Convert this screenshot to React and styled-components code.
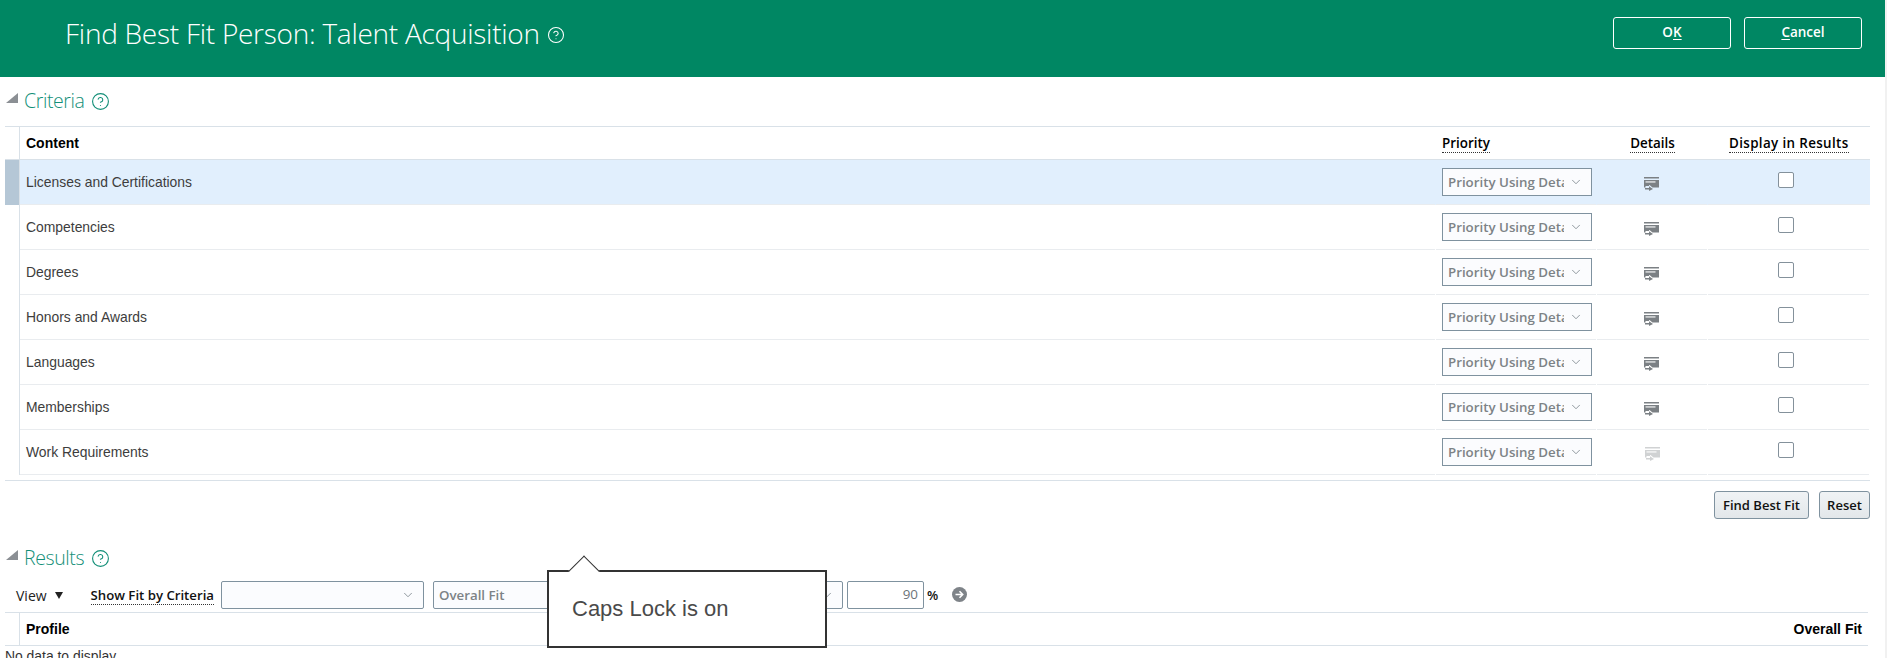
import React from "react";
import styled, { createGlobalStyle } from "styled-components";
import { CircleHelp, ChevronDown } from "lucide-react";

const Global = createGlobalStyle`
  html, body { margin: 0; padding: 0; background: #f1f1f1; overflow: hidden; }
  * { box-sizing: border-box; }
`;

const SANS = `"Liberation Sans", Arial, sans-serif`;
const UI = `"Open Sans", "Noto Sans", sans-serif`;
const LINE = "#d9e1e8";
const ROW_LINE = "#e9ecef";

const Page = styled.div`
  position: relative;
  width: 1885px;
  height: 658px;
  overflow: hidden;
  background: #fff;
  font-family: ${SANS};
`;

const Header = styled.header`
  height: 77px;
  background: #008763;
  padding: 17px 23px 0 65px;
  display: flex;
  justify-content: space-between;
  align-items: flex-start;
  color: #fff;
`;

const TitleWrap = styled.div`
  display: flex;
  align-items: center;
  gap: 7px;
  height: 36px;
`;

const Title = styled.h1`
  margin: -5px 0 0;
  font: 300 28px/36px ${UI};
  letter-spacing: -0.26px;
`;

const HeaderActions = styled.div`
  display: flex;
  gap: 13px;
`;

const HeaderButton = styled.button`
  width: 118px;
  height: 32px;
  background: transparent;
  border: 1px solid #fff;
  border-radius: 3px;
  color: #fff;
  font: 600 13.5px/1 ${UI};
  padding: 0;
  u { text-underline-offset: 2px; }
`;

const Section = styled.section`
  padding: 0 15px 0 5px;
`;

const SectionHead = styled.div`
  height: ${(p) => p.$height}px;
  margin-top: ${(p) => p.$top || 0}px;
  display: flex;
  align-items: center;
`;

const Triangle = styled.svg`
  width: 12px;
  height: 10px;
  margin: 0 6px 7px 1px;
  fill: #8b8f94;
`;

const SectionTitle = styled.h2`
  margin: ${(p) => p.$lift || 0}px 7px 0 0;
  font: 300 19.5px/1 ${UI};
  letter-spacing: -0.4px;
  color: #138f78;
`;

const GRID = "15px 1416px 161px 111px 1fr";

const TableRow = styled.div`
  display: grid;
  grid-template-columns: ${GRID};
  height: 45px;
  background: ${(p) => (p.$selected ? "#e1effd" : "transparent")};
`;

const HeadRow = styled(TableRow)`
  height: 34px;
  border-top: 1px solid ${LINE};
  border-bottom: 1px solid ${LINE};
`;

const Selector = styled.div`
  border-right: 1px solid ${LINE};
  background: ${(p) => (p.$selected ? "#b5c7d6" : "transparent")};
`;

const Cell = styled.div`
  display: flex;
  align-items: center;
  justify-content: ${(p) => p.$justify || "flex-start"};
  padding-left: ${(p) => p.$pad || 0}px;
  padding-right: ${(p) => p.$padRight || 0}px;
  margin-right: 1px;
  border-bottom: 1px solid ${ROW_LINE};
  font-size: 13.9px;
  color: #3d3d3d;
`;

const HeadCell = styled.div`
  display: flex;
  align-items: center;
  justify-content: ${(p) => p.$justify || "flex-start"};
  padding-left: ${(p) => p.$pad || 0}px;
  padding-right: ${(p) => p.$padRight || 0}px;
`;

const PlainHead = styled.span`
  font: 700 14px/1 ${SANS};
  color: #000;
`;

const DottedHead = styled.span`
  font: 600 13.4px/17px ${UI};
  letter-spacing: ${(p) => p.$track || 0}px;
  margin-top: 1px;
  color: #000;
  border-bottom: 1px dotted #333;
`;

const RowEnd = styled.div`
  height: 6px;
  border-bottom: 1px solid ${LINE};
`;

const Select = styled.div`
  width: ${(p) => p.$width}px;
  height: 28px;
  flex: none;
  display: flex;
  align-items: center;
  padding: 0 8px 0 5px;
  background: #fbfcfe;
  border: 1px solid #7f929f;
  border-radius: ${(p) => (p.$round ? 2 : 0)}px;
  font: 600 13.3px/1 ${UI};
  color: #7d8386;
`;

const SelectText = styled.span`
  flex: 1;
  min-width: 0;
  white-space: nowrap;
  overflow: hidden;
  margin: 2px 5px 0 0;
`;

const Check = styled.div`
  width: 16px;
  height: 16px;
  margin-top: -5px;
  background: #fff;
  border: 1px solid #84919b;
  border-radius: 2px;
`;

const IconSlot = styled.svg`
  width: 15px;
  height: 14px;
  margin-top: 3px;
  margin-left: ${(p) => (p.$faded ? 3 : 0)}px;
  opacity: ${(p) => (p.$faded ? 0.35 : 1)};
`;

const ActionBar = styled.div`
  display: flex;
  justify-content: flex-end;
  gap: 10px;
  padding-top: 10px;
`;

const ActionButton = styled.button`
  height: 28px;
  width: ${(p) => p.$width}px;
  padding: 0;
  border: 1px solid #7f929f;
  border-radius: 3px;
  background: linear-gradient(#f0f3f5, #e3e7ea);
  font: 600 13px/1 ${UI};
  color: #111;
`;

const Toolbar = styled.div`
  height: 35px;
  padding: 4px 0 0 11px;
  display: flex;
  align-items: flex-start;
`;

const ViewMenu = styled.div`
  width: 74.5px;
  height: 28px;
  padding-top: 1px;
  display: flex;
  align-items: center;
  gap: 8px;
  font: 400 14px/1 ${UI};
  color: #222;
`;

const Caret = styled.span`
  width: 0;
  height: 0;
  border-left: 4px solid transparent;
  border-right: 4px solid transparent;
  border-top: 7px solid #222;
`;

const FieldLabel = styled.span`
  font: 600 13.2px/17px ${UI};
  color: #111;
  border-bottom: 1px dotted #333;
  margin: 6px 7px 0 0;
  white-space: nowrap;
`;

const Spacer = styled.div`
  width: ${(p) => p.$w}px;
  flex: none;
`;

const NumberBox = styled.div`
  width: 77px;
  height: 28px;
  margin-left: 4px;
  padding-right: 5px;
  display: flex;
  align-items: center;
  justify-content: flex-end;
  border: 1px solid #7f929f;
  border-radius: 2px;
  font: 400 13.4px/1 ${UI};
  color: #6c7478;
`;

const Unit = styled.span`
  margin: 6px 14px 0 3px;
  font: 600 13px/16px ${UI};
  color: #111;
`;

const GoIcon = styled.svg`
  width: 15px;
  height: 15px;
  margin-top: 6px;
`;

const ProfileHead = styled.div`
  height: 34px;
  width: 1863px;
  display: grid;
  grid-template-columns: 15px 1fr auto;
  border-top: 1px solid ${LINE};
  border-bottom: 1px solid ${LINE};
`;

const Empty = styled.div`
  font: 400 13.9px/18px ${SANS};
  color: #333;
  padding-top: 1px;
`;

const Tooltip = styled.div`
  position: absolute;
  left: 547px;
  top: 570px;
  width: 280px;
  height: 78px;
  padding: 0 0 0 23px;
  display: flex;
  align-items: center;
  background: #fff;
  border: 2px solid #333;
  font: 400 22px/1 ${SANS};
  color: #4a4a4a;
  &::before {
    content: "";
    position: absolute;
    left: 24px;
    top: -12px;
    width: 21px;
    height: 21px;
    background: #fff;
    border-top: 1px solid #333;
    border-left: 1px solid #333;
    transform: rotate(45deg);
  }
`;

const DetailsIcon = ({ faded }) => (
  <IconSlot $faded={faded} viewBox="0 0 15 14">
    <path fill="#7b8084" d="M0 0h15v1.5H0zM0 3h15v7.5H8.5L5.5 8H5v1H1.5v1.5H0z" />
    <path fill="#7b8084" d="M1 11h4V9.2L9 12l-4 2v-1.6H1z" />
    <path fill="#fff" d="M1.5 4.4h10v1.1h-10z" />
  </IconSlot>
);

const rows = [
  "Licenses and Certifications",
  "Competencies",
  "Degrees",
  "Honors and Awards",
  "Languages",
  "Memberships",
  "Work Requirements",
];

const SectionTriangle = () => (
  <Triangle viewBox="0 0 12 10">
    <path d="M12 0v10H0z" />
  </Triangle>
);

export default function App() {
  return (
    <Page>
      <Global />
      <Header>
        <TitleWrap>
          <Title>Find Best Fit Person: Talent Acquisition</Title>
          <CircleHelp size={18} strokeWidth={1.4} color="#fff" />
        </TitleWrap>
        <HeaderActions>
          <HeaderButton>O<u>K</u></HeaderButton>
          <HeaderButton><u>C</u>ancel</HeaderButton>
        </HeaderActions>
      </Header>

      <Section>
        <SectionHead $height={49}>
          <SectionTriangle />
          <SectionTitle $lift={-2}>Criteria</SectionTitle>
          <CircleHelp size={19} strokeWidth={1.4} color="#138f78" />
        </SectionHead>

        <HeadRow>
          <Selector />
          <HeadCell $pad={6}><PlainHead>Content</PlainHead></HeadCell>
          <HeadCell $pad={6}><DottedHead>Priority</DottedHead></HeadCell>
          <HeadCell $justify="center"><DottedHead>Details</DottedHead></HeadCell>
          <HeadCell $pad={21}><DottedHead $track={0.36}>Display in Results</DottedHead></HeadCell>
        </HeadRow>

        {rows.map((name, i) => (
          <TableRow key={name} $selected={i === 0}>
            <Selector $selected={i === 0} />
            <Cell $pad={6}>{name}</Cell>
            <Cell $pad={6}>
              <Select $width={150}>
                <SelectText>Priority Using Details</SelectText>
                <ChevronDown size={14} strokeWidth={1.3} color="#6f7a82" />
              </Select>
            </Cell>
            <Cell $justify="center" $padRight={2}>
              <DetailsIcon faded={i === rows.length - 1} />
            </Cell>
            <Cell $pad={70}><Check /></Cell>
          </TableRow>
        ))}
        <RowEnd />

        <ActionBar>
          <ActionButton $width={95}>Find Best Fit</ActionButton>
          <ActionButton $width={51}>Reset</ActionButton>
        </ActionBar>

        <SectionHead $height={38} $top={20}>
          <SectionTriangle />
          <SectionTitle>Results</SectionTitle>
          <CircleHelp size={19} strokeWidth={1.4} color="#138f78" />
        </SectionHead>

        <Toolbar>
          <ViewMenu>View <Caret /></ViewMenu>
          <FieldLabel>Show Fit by Criteria</FieldLabel>
          <Select $width={203} $round>
            <SelectText />
            <ChevronDown size={14} strokeWidth={1.3} color="#6f7a82" />
          </Select>
          <Spacer $w={9} />
          <Select $width={410} $round>
            <SelectText>Overall Fit</SelectText>
            <ChevronDown size={14} strokeWidth={1.3} color="#6f7a82" />
          </Select>
          <NumberBox>90</NumberBox>
          <Unit>%</Unit>
          <GoIcon viewBox="0 0 15 15">
            <circle cx="7.5" cy="7.5" r="7.5" fill="#7e8388" />
            <path d="M3.5 7.5h7M7.5 4.3l3.2 3.2-3.2 3.2" fill="none" stroke="#fff" strokeWidth="1.6" />
          </GoIcon>
        </Toolbar>

        <ProfileHead>
          <Selector />
          <HeadCell $pad={6}><PlainHead>Profile</PlainHead></HeadCell>
          <HeadCell $padRight={6}><PlainHead>Overall Fit</PlainHead></HeadCell>
        </ProfileHead>
        <Empty>No data to display.</Empty>
      </Section>

      <Tooltip>Caps Lock is on</Tooltip>
    </Page>
  );
}
